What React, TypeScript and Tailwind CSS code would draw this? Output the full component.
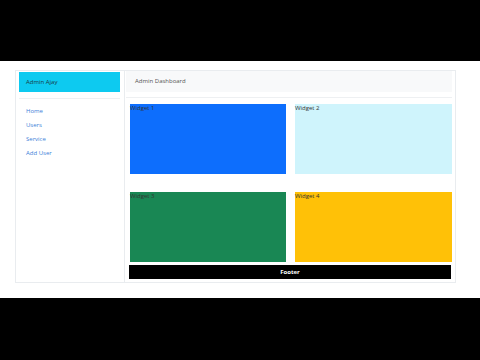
export default function App() {
  const links = ["Home", "Users", "Service", "Add User"];
  const widgets = [
    { name: "Widget 1", cls: "bg-[#0d6efd]" },
    { name: "Widget 2", cls: "bg-[#cff4fc]" },
    { name: "Widget 3", cls: "bg-[#198754]" },
    { name: "Widget 4", cls: "bg-[#ffc107]" },
  ];

  return (
    <div className="flex h-[360px] w-[480px] flex-col bg-white font-['Open_Sans',sans-serif] text-[6px]">
      <div className="h-[61px] bg-black" />
      <div className="flex-1 pl-[15px] pt-[9px]">
        <div className="flex h-[213px] w-[441px] border border-[#e9ecef]">
          <aside className="w-[109px] border-r border-[#e9ecef] pl-[3px] pr-[4px] pt-[1px]">
            <div className="flex h-[20px] items-center bg-[#0dcaf0] pl-[7px] text-[#1a3a44]">Admin Ajay</div>
            <div className="mt-[6px] border-t border-[#eef0f2]" />
            <ul className="mt-[8px] flex flex-col gap-[5px] pl-[7px]">
              {links.map((l) => (
                <li key={l} className="h-[9px] leading-[9px] text-[#3d7fd9]">
                  {l}
                </li>
              ))}
            </ul>
          </aside>
          <main className="flex flex-1 flex-col px-[1px]">
            <div className="flex h-[21px] w-[326px] items-center bg-[#f8f9fa] pl-[9px] text-[#555]">Admin Dashboard</div>
            <div className="mt-[5px] w-[326px] border-t border-[#eef0f2]" />
            <div className="ml-[4px] mt-[6px] grid w-[322px] grid-cols-[156px_157px] gap-x-[9px] gap-y-[18px]">
              {widgets.map((w) => (
                <div key={w.name} className={`h-[70px] ${w.cls} leading-[9px] text-[#333]`}>
                  {w.name}
                </div>
              ))}
            </div>
            <div className="ml-[3px] mt-[3px] flex h-[14px] w-[322px] items-center justify-center bg-black font-bold text-white">
              Footer
            </div>
          </main>
        </div>
      </div>
      <div className="h-[62px] bg-black" />
    </div>
  );
}
